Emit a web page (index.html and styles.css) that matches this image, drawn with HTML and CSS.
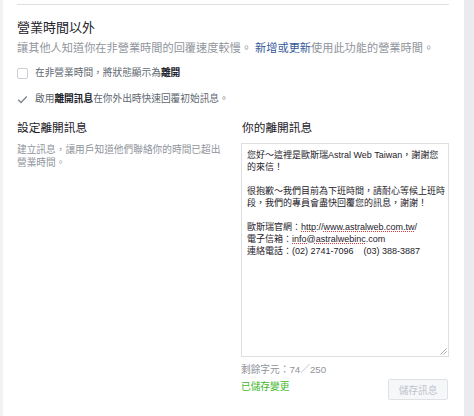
FILE: index.html
```html
<!DOCTYPE html>
<html lang="zh-Hant">
<head>
<meta charset="utf-8">
<link rel="stylesheet" href="styles.css">
</head>
<body>
<div class="page">
  <div class="edge"></div>
  <main class="card">
    <div class="divider"></div>
    <h1 class="title">營業時間以外</h1>
    <p class="subtitle">讓其他人知道你在非營業時間的回覆速度較慢。 <a class="link">新增或更新</a>使用此功能的營業時間。</p>
    <div class="option">
      <span class="checkbox"></span>
      <span class="opt-text">在非營業時間，將狀態顯示為<b>離開</b></span>
    </div>
    <div class="option option-2">
      <svg class="check" width="11" height="9" viewBox="0 0 11 9"><path d="M1.2 4.8 L4 7.5 L9.8 1.4" fill="none" stroke="#7f858f" stroke-width="1.4"/></svg>
      <span class="opt-text">啟用<b>離開訊息</b>在你外出時快速回覆初始訊息。</span>
    </div>
    <div class="columns">
      <section class="col-left">
        <h2 class="heading">設定離開訊息</h2>
        <p class="desc">建立訊息，讓用戶知道他們聯絡你的時間已超出營業時間。</p>
      </section>
      <section class="col-right">
        <h2 class="heading heading-right">你的離開訊息</h2>
        <div class="textarea">
          <div class="line">您好～這裡是歐斯瑞Astral Web Taiwan，謝謝您</div>
          <div class="line">的來信！</div>
          <div class="line blank"></div>
          <div class="line">很抱歉～我們目前為下班時間，請耐心等候上班時</div>
          <div class="line">段，我們的專員會盡快回覆您的訊息，謝謝！</div>
          <div class="line blank"></div>
          <div class="line">歐斯瑞官網：<span class="spell">http</span>://<span class="spell">www.astralweb.com.tw</span>/</div>
          <div class="line">電子信箱：<span class="spell">info@astralwebinc</span>.com</div>
          <div class="line">連絡電話：(02) 2741-7096&nbsp;&nbsp;&nbsp;&nbsp;(03) 388-3887</div>
          <svg class="grip" width="7" height="7" viewBox="0 0 7 7"><path d="M6.5 0.5 L0.5 6.5 M6.5 3.5 L3.5 6.5" stroke="#9da1a8" stroke-width="0.9" fill="none"/></svg>
        </div>
        <div class="counter">剩餘字元：74／250</div>
        <div class="footer">
          <span class="saved">已儲存變更</span>
          <button class="save-btn" type="button">儲存訊息</button>
        </div>
      </section>
    </div>
  </main>
  <div class="rail"></div>
</div>
</body>
</html>
```
FILE: styles.css
```css
html, body {
  margin: 0;
  padding: 0;
  background: #ffffff;
}
body {
  font-family: "Liberation Sans", "Noto Sans CJK TC", sans-serif;
  color: #1d2129;
}
.page {
  display: flex;
  width: 474px;
  height: 416px;
  overflow: hidden;
}
.edge {
  width: 3px;
  background: #f1f2f4;
  flex: none;
}
.card {
  width: 461px;
  box-sizing: border-box;
  padding: 0 15px 0 14px;
  background: #ffffff;
  flex: none;
}
.rail {
  flex: 1;
  background: #e9ebee;
}
.divider {
  margin-top: 4px;
  height: 1px;
  background: #dddfe2;
}
.title {
  margin: 15px 0 0;
  font-size: 13px;
  line-height: 16px;
  font-weight: normal;
  color: #1d2129;
}
.subtitle {
  margin: 5px 0 0;
  font-size: 11.2px;
  line-height: 14px;
  color: #90949c;
  white-space: nowrap;
}
.link {
  color: #365899;
}
.option {
  display: flex;
  align-items: center;
  margin-top: 11px;
  height: 14px;
}
.option-2 {
  margin-top: 12px;
}
.checkbox {
  width: 11px;
  height: 11px;
  box-sizing: border-box;
  border: 1px solid #ccd0d5;
  border-radius: 2px;
  background: #fff;
  flex: none;
}
.check {
  flex: none;
}
.opt-text {
  margin-left: 7px;
  font-size: 9.7px;
  line-height: 14px;
  color: #606770;
}
.opt-text b {
  color: #1d2129;
  font-weight: bold;
}
.columns {
  display: flex;
  gap: 14px;
  margin-top: 15px;
}
.col-left {
  width: 210px;
  flex: none;
}
.col-right {
  width: 208px;
  flex: none;
}
.heading {
  margin: 0;
  font-size: 11.7px;
  line-height: 14px;
  font-weight: normal;
  color: #1d2129;
}
.heading-right {
  padding-left: 1px;
}
.desc {
  margin: 7.5px 0 0;
  font-size: 9.7px;
  line-height: 13px;
  color: #90949c;
}
.textarea {
  position: relative;
  margin-top: 8px;
  height: 214px;
  box-sizing: border-box;
  border: 1px solid #dddfe2;
  padding: 5px 3px 0 5px;
  font-size: 9px;
  line-height: 12px;
  color: #1d2129;
}
.line {
  height: 12px;
  white-space: nowrap;
}
.spell {
  text-decoration: underline dotted #e0393e;
  text-decoration-thickness: 1px;
  text-underline-offset: 1px;
}
.grip {
  position: absolute;
  right: 1px;
  bottom: 1px;
}
.counter {
  margin-top: 5.5px;
  font-size: 9.7px;
  line-height: 13px;
  color: #90949c;
}
.footer {
  display: flex;
  justify-content: space-between;
  align-items: flex-start;
  margin-top: 3.5px;
}
.saved {
  margin-top: 0.5px;
  font-size: 9.7px;
  line-height: 13px;
  color: #42b72a;
}
.save-btn {
  width: 60px;
  height: 21px;
  margin-right: 1px;
  padding: 0;
  box-sizing: border-box;
  border: 1px solid #dfe1e4;
  border-radius: 2px;
  background: #f6f7f9;
  font-family: "Liberation Sans", "Noto Sans CJK TC", sans-serif;
  font-size: 9.7px;
  color: #bec3c9;
}
```
